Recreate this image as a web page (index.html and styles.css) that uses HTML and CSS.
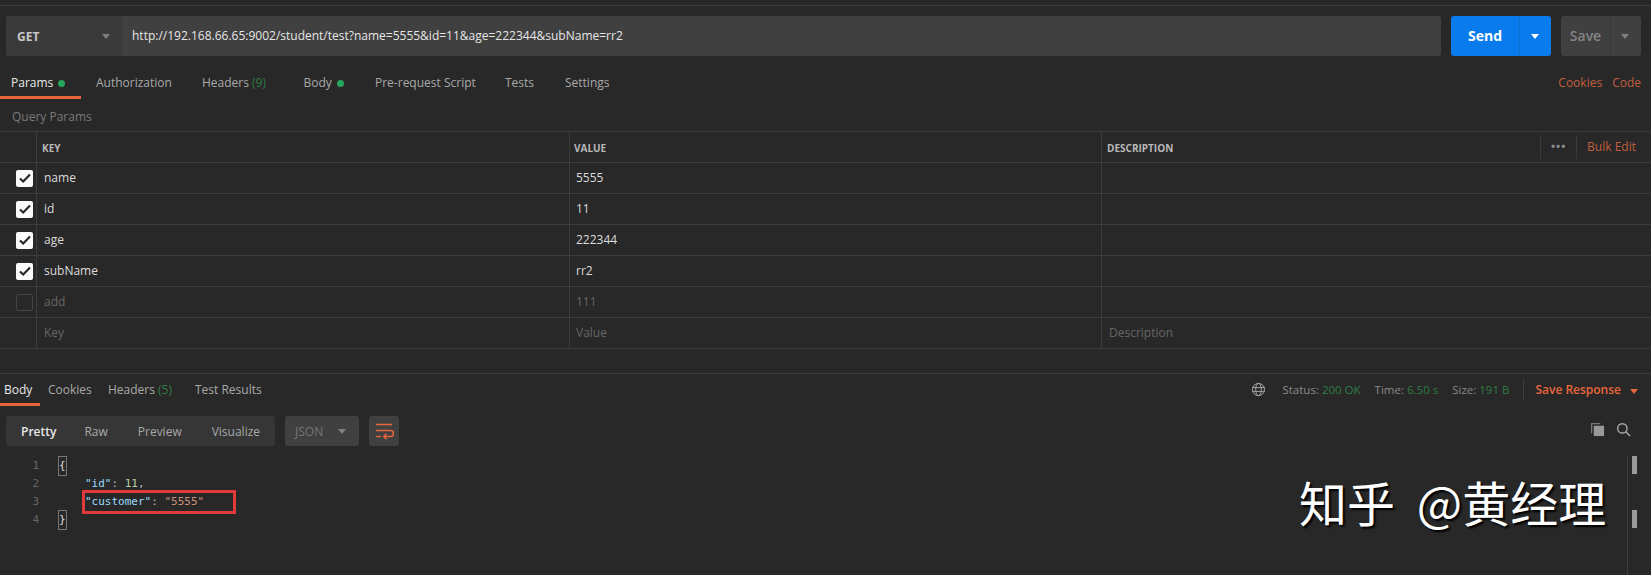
FILE: index.html
```html
<!DOCTYPE html>
<html lang="zh-CN">
<head>
<meta charset="utf-8">
<title>Postman</title>
<link rel="stylesheet" href="styles.css">
</head>
<body>
<div class="topline"></div>
<div class="urlrow">
  <div class="urlbox">
    <div class="method"><span>GET</span><i class="caret"></i></div>
    <div class="url">http://192.168.66.65:9002/student/test?name=5555&amp;id=11&amp;age=222344&amp;subName=rr2</div>
  </div>
  <div class="send"><span class="send-l">Send</span><span class="send-r"><i class="caret white"></i></span></div>
  <div class="save"><span class="save-l">Save</span><span class="save-r"><i class="caret"></i></span></div>
</div>
<div class="tabs">
  <div class="tab active t-params">Params<b class="dot"></b></div>
  <div class="tab t-auth">Authorization</div>
  <div class="tab t-head">Headers <em>(9)</em></div>
  <div class="tab t-body">Body<b class="dot"></b></div>
  <div class="tab t-pre">Pre-request Script</div>
  <div class="tab t-tests">Tests</div>
  <div class="tab t-set">Settings</div>
  <div class="tab-links"><span>Cookies</span><span>Code</span></div>
</div>
<div class="qp">Query Params</div>
<div class="table">
  <div class="row head">
    <div class="c0"></div><div class="c1">KEY</div><div class="c2">VALUE</div>
    <div class="c3"><span>DESCRIPTION</span><div class="bulk"><span class="dots">•••</span><span class="be">Bulk Edit</span></div></div>
  </div>
  <div class="row"><div class="c0"><i class="chk"><svg viewBox="0 0 16 16" width="16" height="16"><path d="M3 8.5l3.2 3L13 4.6" fill="none" stroke="#282828" stroke-width="2.2"/></svg></i></div><div class="c1">name</div><div class="c2">5555</div><div class="c3"></div></div>
  <div class="row"><div class="c0"><i class="chk"><svg viewBox="0 0 16 16" width="16" height="16"><path d="M3 8.5l3.2 3L13 4.6" fill="none" stroke="#282828" stroke-width="2.2"/></svg></i></div><div class="c1">id</div><div class="c2">11</div><div class="c3"></div></div>
  <div class="row"><div class="c0"><i class="chk"><svg viewBox="0 0 16 16" width="16" height="16"><path d="M3 8.5l3.2 3L13 4.6" fill="none" stroke="#282828" stroke-width="2.2"/></svg></i></div><div class="c1">age</div><div class="c2">222344</div><div class="c3"></div></div>
  <div class="row"><div class="c0"><i class="chk"><svg viewBox="0 0 16 16" width="16" height="16"><path d="M3 8.5l3.2 3L13 4.6" fill="none" stroke="#282828" stroke-width="2.2"/></svg></i></div><div class="c1">subName</div><div class="c2">rr2</div><div class="c3"></div></div>
  <div class="row off"><div class="c0"><i class="chk empty"></i></div><div class="c1">add</div><div class="c2">111</div><div class="c3"></div></div>
  <div class="row off"><div class="c0"></div><div class="c1">Key</div><div class="c2">Value</div><div class="c3">Description</div></div>
</div>
<div class="resp">
  <div class="rtabs">
    <div class="rtab active r-body">Body</div>
    <div class="rtab r-cook">Cookies</div>
    <div class="rtab r-head">Headers <em>(5)</em></div>
    <div class="rtab r-test">Test Results</div>
    <div class="status">
      <svg class="globe" viewBox="0 0 16 16" width="15" height="15"><g fill="none" stroke="#aaa" stroke-width="1"><circle cx="8" cy="8" r="6.5"/><ellipse cx="8" cy="8" rx="3" ry="6.5"/><path d="M1.5 6h13M1.5 10h13"/></g></svg>
      <span class="st">Status: <em>200 OK</em></span>
      <span class="st">Time: <em>6.50 s</em></span>
      <span class="st">Size: <em>191 B</em></span>
      <span class="saver">Save Response<i class="caret orange"></i></span>
    </div>
  </div>
  <div class="toolbar">
    <div class="modes"><span class="m-on">Pretty</span><span>Raw</span><span>Preview</span><span>Visualize</span></div>
    <div class="json"><span>JSON</span><i class="caret"></i></div>
    <div class="wrap"><svg viewBox="0 0 20 20" width="20" height="20"><g fill="none" stroke="#e8663c" stroke-width="1.6"><path d="M2 3.5h16M2 9.5h14.5a2.7 2.7 0 0 1 0 6H10M2 15.5h5"/><path d="M12.5 12.8l-2.7 2.7 2.7 2.7"/></g></svg></div>
    <div class="tools">
      <svg viewBox="0 0 16 16" width="15" height="15"><path d="M1 1h10v1.4H2.4V12H1z" fill="#777"/><rect x="4" y="4" width="11" height="11" fill="#999"/></svg>
      <svg viewBox="0 0 16 16" width="15" height="15"><g fill="none" stroke="#aaa" stroke-width="1.5"><circle cx="6.8" cy="6.8" r="5"/><path d="M10.5 10.5L15 15"/></g></svg>
    </div>
  </div>
  <div class="code">
    <div class="gutter"><div>1</div><div>2</div><div>3</div><div>4</div></div>
    <div class="lines">
      <div><span class="brace">{</span></div>
      <div class="ind"><span class="k">"id"</span>: <span class="n">11</span>,</div>
      <div class="ind"><span class="k">"customer"</span>: <span class="s">"5555"</span></div>
      <div><span class="brace">}</span></div>
    </div>
  </div>
</div>
<div class="redbox"></div>
<div class="scroll"><i class="s1"></i><i class="s2"></i></div>
<div class="mark">知乎 @黄经理</div>
</body>
</html>
```

FILE: styles.css
```css
* { box-sizing: border-box; }
html, body { margin: 0; padding: 0; }
body {
  width: 1651px; height: 575px; overflow: hidden; position: relative;
  background: #282828; color: #d0d0d0;
  font-family: "Open Sans", "Noto Sans", sans-serif; font-size: 12px;
}
i { display: inline-block; font-style: normal; }
em { font-style: normal; color: #2f7d44; }
.topline { height: 6px; border-bottom: 1px solid #3d3d3d; }
.caret { width: 0; height: 0; border-left: 4px solid transparent; border-right: 4px solid transparent; border-top: 5px solid #808080; }
.caret.white { border-top-color: #fff; }
.caret.orange { border-top-color: #e8663c; margin-left: 9px; }

.urlrow { display: flex; padding: 10px 10px 0 6px; height: 50px; }
.urlbox { width: 1435px; height: 40px; display: flex; background: #404040; border-radius: 3px; }
.method { width: 116px; background: #3a3a3a; display: flex; align-items: center; justify-content: space-between; padding: 0 12px 0 11px; font-weight: 700; color: #c8c8c8; border-radius: 3px 0 0 3px; }
.url { padding-left: 10px; line-height: 40px; color: #e6e6e6; font-size: 12px; }
.send { margin-left: 10px; width: 100px; height: 40px; display: flex; background: #097bed; border-radius: 3px; color: #fff; font-weight: 700; font-size: 14px; }
.send-l { width: 69px; text-align: center; line-height: 40px; border-right: 1px solid #0a6fd3; }
.send-r, .save-r { flex: 1; display: flex; align-items: center; justify-content: center; padding-right: 2px; }
.save { margin-left: 10px; width: 80px; height: 40px; display: flex; background: #404040; border-radius: 3px; color: #858585; font-weight: 600; font-size: 14px; }
.save-l { width: 50px; text-align: center; line-height: 40px; border-right: 1px solid #383838; }

.tabs { height: 43px; display: flex; }
.tab { color: #a8a8a8; padding-top: 19px; line-height: 16px; height: 43px; white-space: nowrap; }
.tab.active { color: #e8e8e8; border-bottom: 3px solid #e8663c; }
.t-params { width: 81px; padding-left: 11px; margin-right: 15px; }
.t-auth { width: 106px; }
.t-head { width: 101.5px; }
.t-body { width: 71.5px; }
.t-pre { width: 130px; }
.t-tests { width: 60px; }
.dot { display: inline-block; width: 7px; height: 7px; border-radius: 50%; background: #26a65b; margin-left: 5px; }
.tab-links { margin-left: auto; color: #c15f3f; padding-top: 19px; line-height: 16px; padding-right: 10px; }
.tab-links span + span { margin-left: 10px; }

.qp { height: 32px; line-height: 36px; padding-left: 12px; color: #7a7a7a; }

.table { border-top: 1px solid #3d3d3d; }
.row { display: flex; height: 31px; border-bottom: 1px solid #3d3d3d; line-height: 30px; color: #dcdcdc; }
.head { font-size: 10px; font-weight: 700; color: #b8b8b8; line-height: 32px; }
.c0 { width: 37px; border-right: 1px solid #3d3d3d; display: flex; align-items: center; padding-left: 16px; }
.c1 { width: 533px; padding-left: 7px; border-right: 1px solid #3d3d3d; }
.c2 { width: 532px; padding-left: 6px; border-right: 1px solid #3d3d3d; }
.c3 { flex: 1; padding-left: 7px; display: flex; }
.head .c1 { padding-left: 5px; }
.head .c2 { padding-left: 4px; }
.head .c3 { padding-left: 5px; }
.off { color: #666; }
.chk { width: 17px; height: 17px; background: #fafafa; border-radius: 2px; display: flex; align-items: center; justify-content: center; flex: none; }
.chk.empty { background: transparent; border: 1px solid #444; }
.bulk { margin-left: auto; display: flex; align-items: center; height: 26px; margin-top: 2px; }
.dots { color: #8c8c8c; font-size: 11px; letter-spacing: 1px; width: 37px; height: 24px; line-height: 22px; text-align: center; border-left: 1px solid #3a3a3a; border-right: 1px solid #3a3a3a; }
.be { color: #c15f3f; font-size: 12px; font-weight: 400; padding: 0 15px 0 10px; }

.resp { margin-top: 24px; border-top: 1px solid #3d3d3d; }
.rtabs { display: flex; height: 32px; }
.rtab { color: #a8a8a8; line-height: 32px; height: 32px; white-space: nowrap; }
.rtab.active { color: #e8e8e8; border-bottom: 3px solid #e8663c; }
.r-body { width: 40px; padding-left: 4px; margin-right: 8px; }
.r-cook { width: 60px; }
.r-head { width: 87px; }
.status { margin-left: auto; display: flex; align-items: center; height: 30px; color: #8a8a8a; font-size: 11.5px; padding-right: 13px; }
.globe { margin-right: 16px; }
.st { margin-right: 14px; }
.st em { color: #2f7d44; }
.saver { color: #e8663c; font-size: 12px; font-weight: 600; border-left: 1px solid #3d3d3d; padding-left: 11px; height: 21px; line-height: 21px; }

.toolbar { display: flex; height: 30px; margin-top: 10px; padding-left: 6px; align-items: stretch; }
.modes { width: 269px; background: #363636; border-radius: 3px; display: flex; align-items: center; color: #a8a8a8; padding-left: 15px; }
.modes span { margin-right: 30px; }
.modes .m-on { color: #e8e8e8; font-weight: 600; margin-right: 28px; }
.json { margin-left: 10px; width: 74px; background: #404040; border-radius: 3px; display: flex; align-items: center; justify-content: space-between; padding: 0 13px 0 10px; color: #777; }
.wrap { margin-left: 10px; width: 30px; background: #404040; border-radius: 3px; display: flex; align-items: center; justify-content: center; }
.tools { margin-left: auto; display: flex; align-items: center; gap: 11px; padding-right: 20px; padding-bottom: 3px; }

.code { display: flex; margin-top: 11px; font-family: "DejaVu Sans Mono", monospace; font-size: 11px; line-height: 18px; color: #bbb; }
.gutter { width: 39px; text-align: right; color: #666; }
.lines { margin-left: 20px; }
.ind { padding-left: 26px; }
.brace { display: inline-block; width: 7px; height: 18px; outline: 1px solid #777; color: #ddd; }
.k { color: #9cdcfe; }
.n { color: #b5cea8; }
.s { color: #ce9178; }

.redbox { position: absolute; left: 82px; top: 490px; width: 154px; height: 24px; border: 3px solid #e03a3a; }
.scroll { position: absolute; left: 1627px; top: 456px; bottom: 0; width: 10px; border-left: 1px solid #3d3d3d; }
.scroll i { position: absolute; left: 4px; width: 5px; height: 18px; background: #9a9a9a; }
.s1 { top: 0; }
.s2 { top: 54px; }
.mark { position: absolute; left: 1299px; top: 468px; font-family: "Noto Sans CJK SC", sans-serif; font-size: 48px; word-spacing: 11px; line-height: 66px; color: #fff; white-space: nowrap; text-shadow: 2px 2px 2px #000; }
```
